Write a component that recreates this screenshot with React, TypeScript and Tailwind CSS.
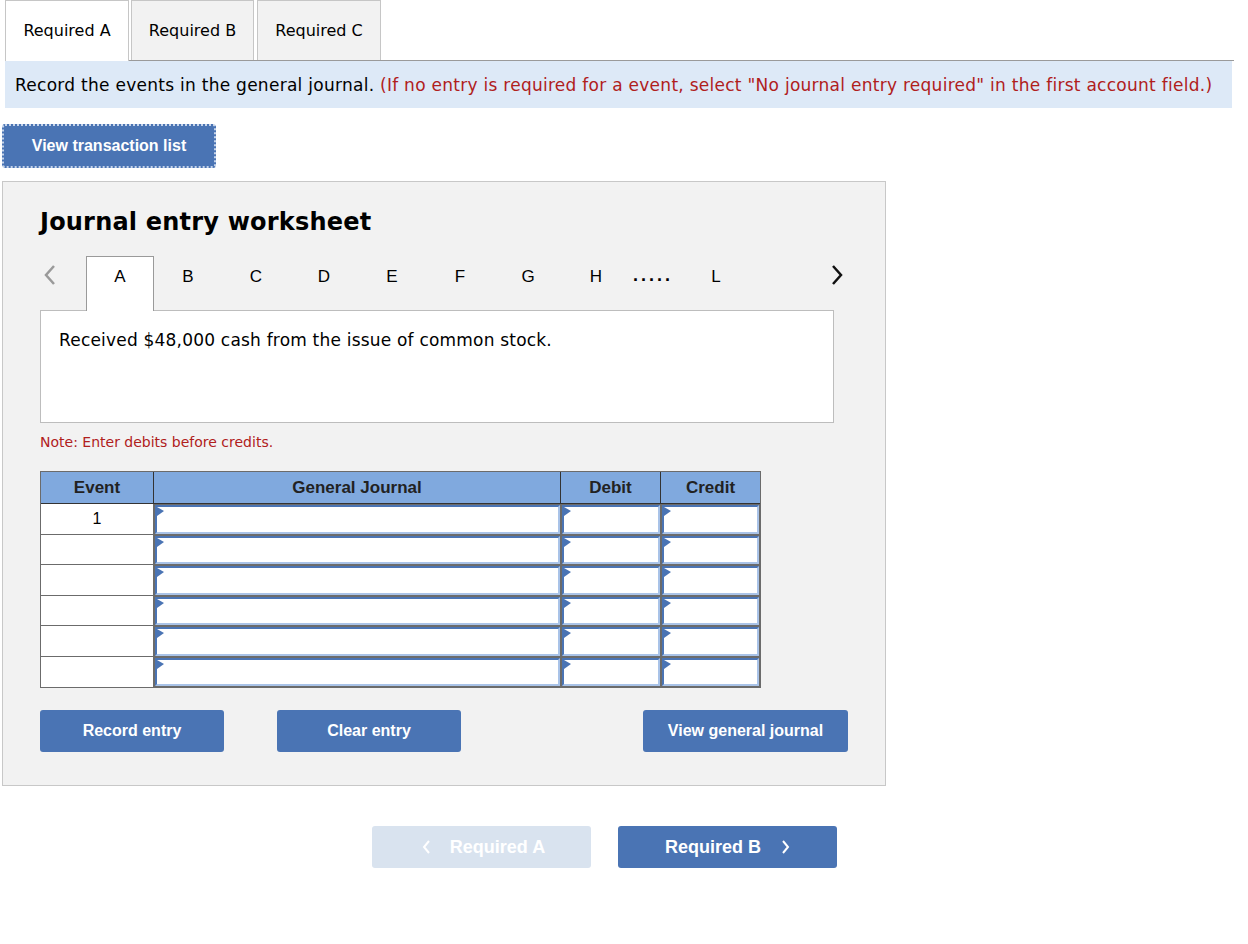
import React from 'react';

const verdana = { fontFamily: '"DejaVu Sans", Verdana, sans-serif' };
const arial = { fontFamily: '"Liberation Sans", Arial, sans-serif' };

const letters = ['A', 'B', 'C', 'D', 'E', 'F', 'G', 'H'];

const Flag = () => (
  <svg className="absolute left-0 top-0" width="8" height="10" viewBox="0 0 8 10">
    <polygon points="0,0 7,4 0,9" fill="#4a74b4" />
  </svg>
);

const InputCell = () => (
  <div className="bg-[#6b6b6b] p-[1px] h-full">
    <div className="relative h-full bg-white border-2 border-[#a9c3e8] border-t-[#4a74b4] border-l-[#4a74b4]">
      <Flag />
    </div>
  </div>
);

const BlueButton = ({ label, width }: { label: string; width: string }) => (
  <button
    className={`${width} h-[42px] rounded-[3px] bg-[#4a74b4] text-white text-[16px] font-bold`}
    style={arial}
  >
    {label}
  </button>
);

export default function App() {
  return (
    <div className="w-[1248px] min-h-[944px] bg-white text-black" style={verdana}>
      {/* Top tabs */}
      <div className="flex pl-[5px] h-[61px]">
        <div className="w-[124px] h-[61px] bg-white border border-b-0 border-[#c6c6c6] flex items-center justify-center text-[16px]">
          Required A
        </div>
        <div className="w-[126px] h-[61px] flex flex-col">
          <div className="flex-1 flex ml-[2px]">
            <div className="w-[123px] bg-[#f2f2f2] border border-[#c6c6c6] border-b-0 flex items-center justify-center text-[16px]">
              Required B
            </div>
          </div>
          <div className="h-[1px] bg-[#9a9a9a]" />
        </div>
        <div className="w-[127px] h-[61px] flex flex-col">
          <div className="flex-1 flex ml-[2px]">
            <div className="w-[124px] bg-[#f2f2f2] border border-[#c6c6c6] border-b-0 flex items-center justify-center text-[16px]">
              Required C
            </div>
          </div>
          <div className="h-[1px] bg-[#9a9a9a]" />
        </div>
        <div className="w-[852px] flex flex-col justify-end">
          <div className="h-[1px] bg-[#9a9a9a]" />
        </div>
      </div>

      {/* Instruction banner */}
      <div className="ml-[5px] w-[1227px] h-[47px] bg-[#dde9f7] flex items-center pl-[10px] pt-[3px] text-[17px] tracking-[0.27px] whitespace-nowrap">
        <span>Record the events in the general journal.&nbsp;</span>
        <span className="text-[#b0201c]">
          (If no entry is required for a event, select "No journal entry required" in the first account field.)
        </span>
      </div>

      {/* View transaction list */}
      <div className="pt-[16px] pl-[2px]">
        <button
          className="w-[214px] h-[44px] rounded-[3px] bg-[#4a74b4] text-white text-[16px] font-bold border-2 border-dotted border-[#c6d4ea]"
          style={arial}
        >
          View transaction list
        </button>
      </div>

      {/* Worksheet panel */}
      <div className="mt-[13px] ml-[2px] w-[884px] h-[605px] bg-[#f2f2f2] border border-[#c8c8c8] pl-[37px] pt-[25px]">
        <h2 className="text-[24px] font-bold leading-[30px] tracking-[0.2px]">Journal entry worksheet</h2>

        {/* Letter tabs */}
        <div className="mt-[19px] flex h-[54px] items-stretch" style={arial}>
          <div className="w-[46px] flex items-start pt-[8px] pl-[3px]">
            <svg width="14" height="22" viewBox="0 0 14 22">
              <polyline points="11,2 3,11 11,20" fill="none" stroke="#9a9a9a" strokeWidth="2.5" />
            </svg>
          </div>
          {letters.map((l, i) => (
            <div
              key={l}
              className={
                i === 0
                  ? 'w-[68px] bg-white border border-b-0 border-[#9a9a9a] flex justify-center pt-[7px] text-[17px] relative z-10 mb-[-1px]'
                  : 'w-[68px] flex justify-center pt-[8px] text-[17px]'
              }
            >
              {l}
            </div>
          ))}
          <div className="w-[52px] flex justify-center pt-[6px] pr-[6px] text-[18px] font-bold tracking-[3px]">.....</div>
          <div className="w-[68px] flex justify-center pt-[8px] text-[17px]">L</div>
          <div className="w-[94px] flex items-start justify-end pt-[8px]">
            <svg width="14" height="22" viewBox="0 0 14 22">
              <polyline points="3,2 11,11 3,20" fill="none" stroke="#111" strokeWidth="2.5" />
            </svg>
          </div>
        </div>

        {/* Description */}
        <div className="w-[794px] h-[113px] bg-white border border-[#bdbdbd] pl-[18px] pt-[17px] text-[17px] tracking-[0.2px]">
          Received $48,000 cash from the issue of common stock.
        </div>

        <p className="mt-[9px] text-[14px] text-[#b0201c] leading-[20px]">Note: Enter debits before credits.</p>

        {/* Journal table */}
        <div className="mt-[19px] w-[721px] border border-[#6b6b6b]" style={arial}>
          <div className="grid grid-cols-[113px_407px_100px_99px] h-[32px] bg-[#80a9de] text-[17px] font-bold text-[#222] border-b border-[#333]">
            <div className="flex items-center justify-center border-r border-[#333]">Event</div>
            <div className="flex items-center justify-center border-r border-[#333]">General Journal</div>
            <div className="flex items-center justify-center border-r border-[#333]">Debit</div>
            <div className="flex items-center justify-center">Credit</div>
          </div>
          {[0, 1, 2, 3, 4, 5].map((r) => (
            <div key={r} className="grid grid-cols-[113px_407px_100px_99px] h-[30.5px]">
              <div
                className={`bg-white border-r border-[#6b6b6b] ${r < 5 ? 'border-b' : ''} flex items-center justify-center text-[16px]`}
              >
                {r === 0 ? '1' : ''}
              </div>
              <InputCell />
              <InputCell />
              <InputCell />
            </div>
          ))}
        </div>

        {/* Action buttons */}
        <div className="mt-[22px] flex w-[808px]">
          <BlueButton label="Record entry" width="w-[184px]" />
          <div className="w-[53px]" />
          <BlueButton label="Clear entry" width="w-[184px]" />
          <div className="flex-1" />
          <BlueButton label="View general journal" width="w-[205px]" />
        </div>
      </div>

      {/* Bottom navigation */}
      <div className="mt-[40px] pl-[372px] flex gap-[27px]" style={arial}>
        <button className="w-[219px] h-[42px] rounded-[3px] bg-[#d9e3ef] text-white text-[18px] font-bold flex items-center justify-center gap-[19px] pl-[4px]">
          <svg width="9" height="14" viewBox="0 0 9 14">
            <polyline points="7,1 2,7 7,13" fill="none" stroke="#fff" strokeWidth="2" />
          </svg>
          <span>Required A</span>
        </button>
        <button className="w-[219px] h-[42px] rounded-[3px] bg-[#4a74b4] text-white text-[18px] font-bold flex items-center justify-center gap-[20px]">
          <span>Required B</span>
          <svg width="9" height="14" viewBox="0 0 9 14">
            <polyline points="2,1 7,7 2,13" fill="none" stroke="#fff" strokeWidth="2" />
          </svg>
        </button>
      </div>
    </div>
  );
}
